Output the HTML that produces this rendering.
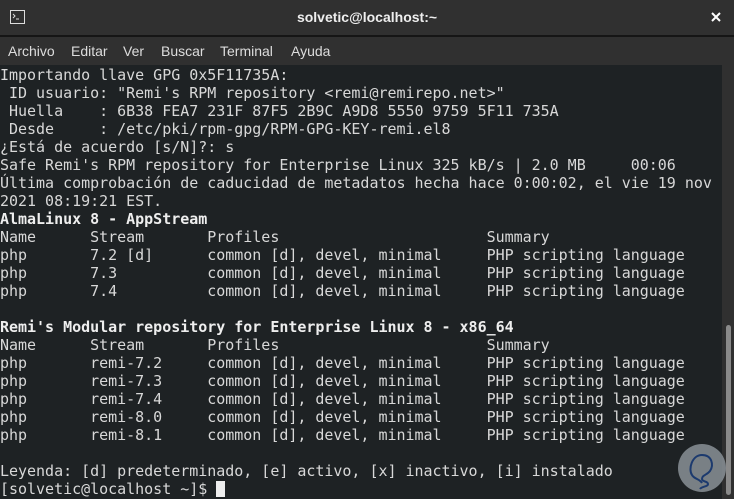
<!DOCTYPE html>
<html><head><meta charset="utf-8"><style>
html,body{margin:0;padding:0;width:734px;height:499px;overflow:hidden;background:#1e2224}
.title{position:absolute;left:0;top:0;width:734px;height:35px;background:#303030;color:#eee;font:bold 14px "Liberation Sans",sans-serif;text-align:center;line-height:35px}
.line{position:absolute;left:0;top:35px;width:734px;height:2px;background:#151515}
.menu{position:absolute;left:0;top:37px;width:734px;height:28px;background:#303030;color:#ddd;font:14px "Liberation Sans",sans-serif;line-height:28px}
.menu span{position:absolute;top:0}
.term{position:absolute;left:0;top:65px;width:722px;height:434px;background:#1e2224}
pre{margin:0;position:absolute;left:0;top:1px;font:15px "DejaVu Sans Mono",monospace;line-height:18px;color:#d8d8d8;white-space:pre;letter-spacing:-0.02px}
b{font-weight:bold;color:#eee}
.sb{position:absolute;left:722px;top:65px;width:12px;height:434px;background:#303030}
.thumb{position:absolute;left:726px;top:325px;width:5px;height:170px;background:#8a8a8a;border-radius:3px}
.cur{display:inline-block;width:9px;height:16px;background:#eee;vertical-align:-3px}
</style></head><body>
<div class="title">solvetic@localhost:~
<svg style="position:absolute;left:10px;top:10px" width="15" height="14" viewBox="0 0 15 14"><rect x="0.5" y="0.5" width="14" height="13" fill="none" stroke="#ddd"/><path d="M3 4l2 2-2 2M6 9h3" stroke="#ddd" fill="none"/></svg>
<svg style="position:absolute;left:711px;top:12px" width="10" height="10" viewBox="0 0 10 10"><path d="M1 1L9 9M9 1L1 9" stroke="#fff" stroke-width="2"/></svg>
</div>
<div class="line"></div>
<div class="menu"><span style="left:8px">Archivo</span><span style="left:71px">Editar</span><span style="left:123px">Ver</span><span style="left:161px">Buscar</span><span style="left:220px">Terminal</span><span style="left:291px">Ayuda</span></div>
<div class="term"><pre>Importando llave GPG 0x5F11735A:
 ID usuario: "Remi's RPM repository &lt;remi@remirepo.net&gt;"
 Huella    : 6B38 FEA7 231F 87F5 2B9C A9D8 5550 9759 5F11 735A
 Desde     : /etc/pki/rpm-gpg/RPM-GPG-KEY-remi.el8
¿Está de acuerdo [s/N]?: s
Safe Remi's RPM repository for Enterprise Linux 325 kB/s | 2.0 MB     00:06
Última comprobación de caducidad de metadatos hecha hace 0:00:02, el vie 19 nov
2021 08:19:21 EST.
<b>AlmaLinux 8 - AppStream</b>
Name      Stream       Profiles                       Summary
php       7.2 [d]      common [d], devel, minimal     PHP scripting language
php       7.3          common [d], devel, minimal     PHP scripting language
php       7.4          common [d], devel, minimal     PHP scripting language

<b>Remi's Modular repository for Enterprise Linux 8 - x86_64</b>
Name      Stream       Profiles                       Summary
php       remi-7.2     common [d], devel, minimal     PHP scripting language
php       remi-7.3     common [d], devel, minimal     PHP scripting language
php       remi-7.4     common [d], devel, minimal     PHP scripting language
php       remi-8.0     common [d], devel, minimal     PHP scripting language
php       remi-8.1     common [d], devel, minimal     PHP scripting language

Leyenda: [d] predeterminado, [e] activo, [x] inactivo, [i] instalado
[solvetic@localhost ~]$ <span class="cur"></span></pre></div>
<div class="sb"></div><div class="thumb"></div>
<svg style="position:absolute;left:677px;top:443px" width="50" height="50" viewBox="0 0 50 50"><circle cx="25" cy="25" r="24" fill="#8a9196" opacity="0.85"/><path d="M25 40c-2-4-8-4-10-8-4-6 0-20 10-20s12 10 8 16c-3 4-8 4-8 8 0 3 6 2 6 5s-6 2-8 5" fill="none" stroke="#1c3a6e" stroke-width="2"/></svg>
</body></html>
